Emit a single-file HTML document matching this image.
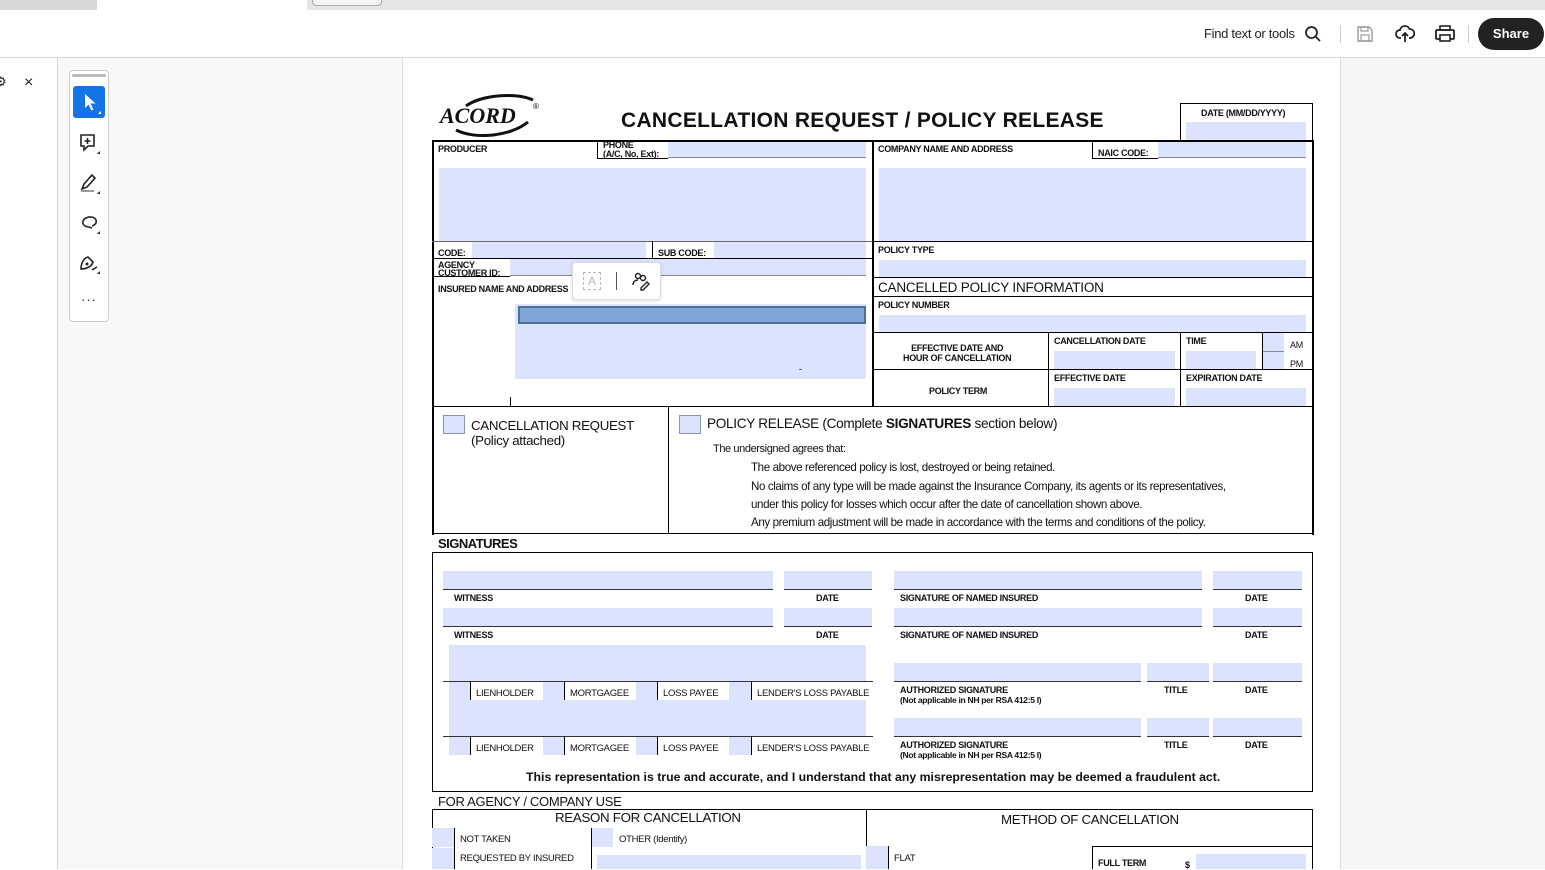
<!DOCTYPE html>
<html><head><meta charset="utf-8"><style>
*{margin:0;padding:0;box-sizing:border-box}
body{width:1545px;height:869px;overflow:hidden;position:relative;background:#fff;font-family:"Liberation Sans",sans-serif}
div,span{position:absolute}
.f{background:#dce3fc}
.h{height:1px;background:#000}
.v{width:1px;background:#000}
.l{font-size:9px;font-weight:bold;letter-spacing:-0.3px;white-space:nowrap;color:#111;line-height:10px}
.n{font-size:9.5px;letter-spacing:-0.3px;white-space:nowrap;color:#111;line-height:11px}
.p{font-size:11.6px;letter-spacing:-0.4px;white-space:nowrap;color:#111;line-height:13px}
.t{font-size:13.3px;letter-spacing:-0.3px;white-space:nowrap;color:#111}
.cb{background:#dce3fc;border:1px solid #8a93b0}
.ul{height:1px;background:#333}
</style></head><body>
<!-- top chrome -->
<div style="left:0;top:0;width:1545px;height:10px;background:#e5e5e5"></div>
<div style="left:0;top:0;width:97px;height:10px;background:#d8d8d8"></div>
<div style="left:97px;top:0;width:210px;height:10px;background:#fff"></div>
<div style="left:312px;top:0;width:70px;height:6px;border:1px solid #aaa;border-top:none;border-radius:0 0 4px 4px;background:#f4f4f4"></div>
<div style="left:0;top:57px;width:1545px;height:1px;background:#d5d5d5"></div>
<span style="left:1204px;top:26px;font-size:13px;color:#222;letter-spacing:-0.3px">Find text or tools</span>
<svg style="position:absolute;left:1304px;top:25px" width="18" height="18" viewBox="0 0 18 18"><circle cx="7.5" cy="7.5" r="5.5" fill="none" stroke="#222" stroke-width="1.8"/><path d="M11.5 11.5L16 16" stroke="#222" stroke-width="1.8"/></svg>
<div style="left:1340px;top:25px;width:1px;height:18px;background:#ccc"></div>
<svg style="position:absolute;left:1356px;top:25px" width="18" height="18" viewBox="0 0 18 18"><path d="M2 2h11l3 3v11H2z" fill="none" stroke="#999" stroke-width="1.4"/><rect x="5" y="2" width="7" height="4" fill="none" stroke="#999" stroke-width="1.2"/><rect x="5" y="10" width="8" height="6" fill="none" stroke="#999" stroke-width="1.2"/></svg>
<svg style="position:absolute;left:1395px;top:24px" width="20" height="20" viewBox="0 0 20 20"><path d="M6 14H5a4 4 0 0 1 0-8 5 5 0 0 1 9.5-1A4 4 0 0 1 15 14h-1" fill="none" stroke="#222" stroke-width="1.8"/><path d="M10 18V9M7 12l3-3 3 3" fill="none" stroke="#222" stroke-width="1.8"/></svg>
<svg style="position:absolute;left:1435px;top:25px" width="20" height="18" viewBox="0 0 20 18"><rect x="5" y="1" width="10" height="4" fill="none" stroke="#222" stroke-width="1.6"/><rect x="1" y="5" width="18" height="9" rx="1" fill="none" stroke="#222" stroke-width="1.8"/><rect x="5" y="10" width="10" height="6" fill="#fff" stroke="#222" stroke-width="1.6"/></svg>
<div style="left:1468px;top:25px;width:1px;height:18px;background:#ccc"></div>
<div style="left:1478px;top:18px;height:32px;background:#222;border-radius:16px;color:#fff;font-weight:bold;font-size:13px;line-height:32px;text-align:center;width:66px">Share</div>
<!-- side panels -->
<div style="left:0;top:58px;width:57px;height:811px;background:#fff"></div>
<div style="left:57px;top:58px;width:1px;height:811px;background:#d5d5d5"></div>
<div style="left:58px;top:58px;width:344px;height:811px;background:#f8f8f8"></div>
<div style="left:402px;top:58px;width:1px;height:811px;background:#ddd"></div>
<div style="left:1340px;top:58px;width:1px;height:811px;background:#ddd"></div>
<div style="left:1341px;top:58px;width:204px;height:811px;background:#f6f6f6"></div>
<span style="left:24px;top:74px;font-size:16px;color:#222">×</span>
<span style="left:-5px;top:74px;font-size:13px;color:#222">⚙</span>
<div style="left:69px;top:70px;width:40px;height:252px;border:1px solid #ccc;border-radius:4px;background:#fff"></div>
<div style="left:72px;top:74px;width:34px;height:3px;background:#bbb;border-radius:2px"></div>
<div style="left:73px;top:86px;width:32px;height:32px;background:#1473e6;border-radius:3px"></div>
<svg style="position:absolute;left:73px;top:86px" width="32" height="32"><path d="M12 8v14l3.5-3.5 3 6 2-1-3-6h5z" fill="#fff"/><path d="M28 25v3h-3z" fill="#fff"/></svg>
<svg style="position:absolute;left:78px;top:132px" width="24" height="24"><path d="M3 3h13v11h-6l-4 4v-4H3z" fill="none" stroke="#222" stroke-width="1.6"/><path d="M9.5 6v6M6.5 9h6" stroke="#222" stroke-width="1.6"/><path d="M22 19v3h-3z" fill="#222"/></svg>
<svg style="position:absolute;left:78px;top:172px" width="24" height="24"><path d="M4 17l2-5 8-9 3 3-8 9z" fill="none" stroke="#222" stroke-width="1.6"/><path d="M3 19h13" stroke="#999" stroke-width="2"/><path d="M22 19v3h-3z" fill="#222"/></svg>
<svg style="position:absolute;left:78px;top:212px" width="24" height="24"><path d="M14 14c3-1 5-3 4-6-1-3-6-4-10-2-4 2-4 6-1 8 2 1 5 1 7 2" fill="none" stroke="#222" stroke-width="1.6"/><path d="M22 19v3h-3z" fill="#222"/></svg>
<svg style="position:absolute;left:78px;top:252px" width="24" height="24"><path d="M3 17c0-6 3-11 7-12l5 5c-1 4-6 7-12 7z" fill="none" stroke="#222" stroke-width="1.6"/><circle cx="9" cy="12" r="1.5" fill="#222"/><path d="M14 18l5-3" stroke="#222" stroke-width="1.6"/><path d="M22 19v3h-3z" fill="#222"/></svg>
<span style="left:81px;top:292px;font-size:13px;color:#222;letter-spacing:1px">···</span>
<!-- page -->
<div style="left:405px;top:58px;width:935px;height:811px;background:#fff"></div>
<!-- logo -->
<svg style="position:absolute;left:436px;top:92px" width="110" height="48"><path d="M30 14C45 3 80 0 97 8" fill="none" stroke="#111" stroke-width="3"/><path d="M20 38C40 48 75 44 92 30" fill="none" stroke="#111" stroke-width="3"/></svg>
<span style="left:440px;top:103px;font-family:'Liberation Serif',serif;font-style:italic;font-weight:bold;font-size:22px;color:#111;letter-spacing:0px">ACORD</span>
<span style="left:533px;top:102px;font-size:8px">®</span>
<span style="left:621px;top:109px;font-size:21px;font-weight:bold;color:#111;letter-spacing:0.3px">CANCELLATION REQUEST / POLICY RELEASE</span>
<!-- date box -->
<div style="left:1180px;top:103px;width:133px;height:38px;border:1px solid #000;border-bottom:none"></div>
<span class="l" style="left:1201px;top:108px">DATE (MM/DD/YYYY)</span>
<div class="f" style="left:1186px;top:122px;width:120px;height:18px"></div>
<!-- main frame -->
<div class="h" style="left:432px;top:140px;width:881px;height:2px"></div>
<div class="v" style="left:432px;top:140px;height:395px;width:2px"></div>
<div class="v" style="left:1312px;top:140px;height:395px;width:2px"></div>
<div class="v" style="left:872px;top:140px;height:267px;width:2px"></div>
<!-- left column -->
<span class="l" style="left:438px;top:144px">PRODUCER</span>
<div class="v" style="left:597px;top:140px;height:19px"></div>
<div class="h" style="left:597px;top:158px;width:71px"></div>
<span class="l" style="left:603px;top:141px;line-height:9px">PHONE<br>(A/C, No, Ext):</span>
<div class="f" style="left:668px;top:142px;width:198px;height:16px;border-bottom:1px solid #889"></div>
<div class="f" style="left:439px;top:168px;width:427px;height:73px"></div>
<div class="h" style="left:432px;top:241px;width:440px;background:#666"></div>
<span class="l" style="left:438px;top:248px">CODE:</span>
<div class="f" style="left:472px;top:242px;width:174px;height:16px"></div>
<div class="v" style="left:652px;top:241px;height:18px"></div>
<span class="l" style="left:658px;top:248px">SUB CODE:</span>
<div class="f" style="left:714px;top:242px;width:152px;height:16px"></div>
<div class="h" style="left:432px;top:258px;width:440px"></div>
<span class="l" style="left:438px;top:261px;line-height:8px">AGENCY<br>CUSTOMER ID:</span>
<div class="h" style="left:432px;top:276px;width:78px"></div>
<div class="f" style="left:510px;top:259px;width:356px;height:17px;border-bottom:1px solid #889"></div>
<span class="l" style="left:438px;top:284px">INSURED NAME AND ADDRESS</span>
<div class="f" style="left:515px;top:304px;width:351px;height:75px"></div>
<div style="left:518px;top:306px;width:348px;height:18px;background:#7ea6d6;border:2px solid #4f6f94"></div>
<span style="left:799px;top:364px;font-size:9px">-</span>
<div class="v" style="left:510px;top:397px;height:9px"></div>
<!-- popup -->
<div style="left:572px;top:262px;width:89px;height:38px;background:#fff;border:1px solid #ddd;border-radius:4px;box-shadow:0 1px 3px rgba(0,0,0,.15)"></div>
<div style="left:583px;top:272px;width:18px;height:18px;border:1px dashed #bbb;color:#bbb;font-size:12px;text-align:center;line-height:16px">A</div>
<div style="left:616px;top:272px;width:1px;height:18px;background:#555"></div>
<svg style="position:absolute;left:631px;top:271px" width="20" height="20"><circle cx="7" cy="5" r="2.5" fill="none" stroke="#222" stroke-width="1.4"/><circle cx="12" cy="7" r="2.5" fill="none" stroke="#222" stroke-width="1.4"/><path d="M2 14c0-3 2-5 5-5M10 17l6-6 2 2-6 6h-2z" fill="none" stroke="#222" stroke-width="1.4"/></svg>
<!-- right column -->
<span class="l" style="left:878px;top:144px">COMPANY NAME AND ADDRESS</span>
<div class="v" style="left:1092px;top:140px;height:19px"></div>
<div class="h" style="left:1092px;top:158px;width:66px"></div>
<span class="l" style="left:1098px;top:148px">NAIC CODE:</span>
<div class="f" style="left:1158px;top:142px;width:148px;height:16px;border-bottom:1px solid #889"></div>
<div class="f" style="left:879px;top:168px;width:427px;height:73px"></div>
<div class="h" style="left:872px;top:241px;width:441px"></div>
<span class="l" style="left:878px;top:245px">POLICY TYPE</span>
<div class="f" style="left:879px;top:260px;width:427px;height:17px"></div>
<div class="h" style="left:872px;top:277px;width:441px"></div>
<span style="left:878px;top:280px;font-size:13.5px;color:#111;letter-spacing:-0.2px">CANCELLED POLICY INFORMATION</span>
<div class="h" style="left:872px;top:296px;width:441px"></div>
<span class="l" style="left:878px;top:300px">POLICY NUMBER</span>
<div class="f" style="left:879px;top:315px;width:427px;height:17px"></div>
<div class="h" style="left:872px;top:332px;width:441px"></div>
<div class="v" style="left:1048px;top:332px;height:75px"></div>
<div class="v" style="left:1180px;top:332px;height:75px"></div>
<div class="v" style="left:1262px;top:332px;height:38px"></div>
<div class="f" style="left:1263px;top:333px;width:21px;height:18px"></div>
<div class="f" style="left:1263px;top:352px;width:21px;height:17px"></div>
<div class="h" style="left:1263px;top:351px;width:21px;background:#889"></div>
<span class="l" style="left:1290px;top:340px;font-weight:normal">AM</span>
<span class="l" style="left:1290px;top:359px;font-weight:normal">PM</span>
<span class="l" style="left:903px;top:343px;text-align:center;line-height:10px">EFFECTIVE DATE AND<br>HOUR OF CANCELLATION</span>
<span class="l" style="left:1054px;top:336px">CANCELLATION DATE</span>
<span class="l" style="left:1186px;top:336px">TIME</span>
<div class="f" style="left:1054px;top:351px;width:121px;height:18px"></div>
<div class="f" style="left:1186px;top:351px;width:70px;height:18px"></div>
<div class="h" style="left:872px;top:369px;width:441px"></div>
<span class="l" style="left:929px;top:386px">POLICY TERM</span>
<span class="l" style="left:1054px;top:373px">EFFECTIVE DATE</span>
<span class="l" style="left:1186px;top:373px">EXPIRATION DATE</span>
<div class="f" style="left:1054px;top:388px;width:121px;height:18px"></div>
<div class="f" style="left:1186px;top:388px;width:120px;height:18px"></div>
<div class="h" style="left:432px;top:406px;width:881px"></div>
<!-- request / release -->
<div class="v" style="left:668px;top:406px;height:128px"></div>
<div class="cb" style="left:443px;top:415px;width:22px;height:19px"></div>
<span class="t" style="left:471px;top:418px">CANCELLATION REQUEST<br>(Policy attached)</span>
<div class="cb" style="left:679px;top:415px;width:22px;height:19px"></div>
<span class="t" style="left:707px;top:416px;font-size:13.6px">POLICY RELEASE (Complete <b>SIGNATURES</b> section below)</span>
<span class="p" style="left:713px;top:443px;font-size:11px">The undersigned agrees that:</span>
<span class="p" style="left:751px;top:461px">The above referenced policy is lost, destroyed or being retained.</span>
<span class="p" style="left:751px;top:480px">No claims of any type will be made against the Insurance Company, its agents or its representatives,</span>
<span class="p" style="left:751px;top:498px">under this policy for losses which occur after the date of cancellation shown above.</span>
<span class="p" style="left:751px;top:516px">Any premium adjustment will be made in accordance with the terms and conditions of the policy.</span>
<div class="h" style="left:432px;top:533px;width:881px"></div>
<!-- signatures -->
<span class="t" style="left:438px;top:536px;font-size:13px;font-weight:bold;letter-spacing:-0.5px">SIGNATURES</span>
<div style="left:432px;top:552px;width:881px;height:240px;border:1px solid #000"></div>
<div class="f" style="left:443px;top:571px;width:330px;height:18px"></div><div class="ul" style="left:443px;top:589px;width:330px"></div>
<div class="f" style="left:784px;top:571px;width:88px;height:18px"></div><div class="ul" style="left:784px;top:589px;width:88px"></div>
<div class="f" style="left:894px;top:571px;width:308px;height:18px"></div><div class="ul" style="left:894px;top:589px;width:308px"></div>
<div class="f" style="left:1213px;top:571px;width:89px;height:18px"></div><div class="ul" style="left:1213px;top:589px;width:89px"></div>
<span class="l" style="left:454px;top:593px">WITNESS</span><span class="l" style="left:816px;top:593px">DATE</span><span class="l" style="left:900px;top:593px">SIGNATURE OF NAMED INSURED</span><span class="l" style="left:1245px;top:593px">DATE</span>
<div class="f" style="left:443px;top:608px;width:330px;height:18px"></div><div class="ul" style="left:443px;top:626px;width:330px"></div>
<div class="f" style="left:784px;top:608px;width:88px;height:18px"></div><div class="ul" style="left:784px;top:626px;width:88px"></div>
<div class="f" style="left:894px;top:608px;width:308px;height:18px"></div><div class="ul" style="left:894px;top:626px;width:308px"></div>
<div class="f" style="left:1213px;top:608px;width:89px;height:18px"></div><div class="ul" style="left:1213px;top:626px;width:89px"></div>
<span class="l" style="left:454px;top:630px">WITNESS</span><span class="l" style="left:816px;top:630px">DATE</span><span class="l" style="left:900px;top:630px">SIGNATURE OF NAMED INSURED</span><span class="l" style="left:1245px;top:630px">DATE</span>
<!-- lienholder blocks -->
<div class="f" style="left:449px;top:645px;width:417px;height:36px"></div>
<div class="ul" style="left:443px;top:681px;width:430px"></div>
<div class="cb" style="left:449px;top:682px;width:21px;height:18px;border:none"></div>
<div class="cb" style="left:543px;top:682px;width:21px;height:18px;border:none"></div>
<div class="cb" style="left:636px;top:682px;width:21px;height:18px;border:none"></div>
<div class="cb" style="left:729px;top:682px;width:22px;height:18px;border:none"></div>
<div class="v" style="left:470px;top:681px;height:19px"></div><div class="v" style="left:564px;top:681px;height:19px"></div><div class="v" style="left:657px;top:681px;height:19px"></div><div class="v" style="left:751px;top:681px;height:19px"></div>
<span class="n" style="left:476px;top:688px">LIENHOLDER</span><span class="n" style="left:570px;top:688px">MORTGAGEE</span><span class="n" style="left:663px;top:688px">LOSS PAYEE</span><span class="n" style="left:757px;top:688px">LENDER'S LOSS PAYABLE</span>
<div class="f" style="left:449px;top:700px;width:417px;height:36px"></div>
<div class="ul" style="left:443px;top:736px;width:430px"></div>
<div class="cb" style="left:449px;top:737px;width:21px;height:18px;border:none"></div>
<div class="cb" style="left:543px;top:737px;width:21px;height:18px;border:none"></div>
<div class="cb" style="left:636px;top:737px;width:21px;height:18px;border:none"></div>
<div class="cb" style="left:729px;top:737px;width:22px;height:18px;border:none"></div>
<div class="v" style="left:470px;top:736px;height:19px"></div><div class="v" style="left:564px;top:736px;height:19px"></div><div class="v" style="left:657px;top:736px;height:19px"></div><div class="v" style="left:751px;top:736px;height:19px"></div>
<span class="n" style="left:476px;top:743px">LIENHOLDER</span><span class="n" style="left:570px;top:743px">MORTGAGEE</span><span class="n" style="left:663px;top:743px">LOSS PAYEE</span><span class="n" style="left:757px;top:743px">LENDER'S LOSS PAYABLE</span>
<!-- authorized -->
<div class="f" style="left:894px;top:663px;width:247px;height:18px"></div><div class="ul" style="left:894px;top:681px;width:247px"></div>
<div class="f" style="left:1147px;top:663px;width:62px;height:18px"></div><div class="ul" style="left:1147px;top:681px;width:62px"></div>
<div class="f" style="left:1213px;top:663px;width:89px;height:18px"></div><div class="ul" style="left:1213px;top:681px;width:89px"></div>
<span class="l" style="left:900px;top:685px">AUTHORIZED SIGNATURE</span><span class="l" style="left:900px;top:695px;font-size:8.5px">(Not applicable in NH per RSA 412:5 I)</span>
<span class="l" style="left:1164px;top:685px">TITLE</span><span class="l" style="left:1245px;top:685px">DATE</span>
<div class="f" style="left:894px;top:718px;width:247px;height:18px"></div><div class="ul" style="left:894px;top:736px;width:247px"></div>
<div class="f" style="left:1147px;top:718px;width:62px;height:18px"></div><div class="ul" style="left:1147px;top:736px;width:62px"></div>
<div class="f" style="left:1213px;top:718px;width:89px;height:18px"></div><div class="ul" style="left:1213px;top:736px;width:89px"></div>
<span class="l" style="left:900px;top:740px">AUTHORIZED SIGNATURE</span><span class="l" style="left:900px;top:750px;font-size:8.5px">(Not applicable in NH per RSA 412:5 I)</span>
<span class="l" style="left:1164px;top:740px">TITLE</span><span class="l" style="left:1245px;top:740px">DATE</span>
<span style="left:526px;top:770px;font-size:12.3px;font-weight:bold;color:#111;letter-spacing:0px">This representation is true and accurate, and I understand that any misrepresentation may be deemed a fraudulent act.</span>
<!-- agency use -->
<span class="t" style="left:438px;top:794px;font-size:13px">FOR AGENCY / COMPANY USE</span>
<div class="h" style="left:432px;top:809px;width:881px"></div>
<div class="v" style="left:432px;top:809px;height:60px"></div>
<div class="v" style="left:1312px;top:809px;height:60px"></div>
<div class="v" style="left:866px;top:809px;height:60px"></div>
<span class="t" style="left:555px;top:810px">REASON FOR CANCELLATION</span>
<span class="t" style="left:1001px;top:812px">METHOD OF CANCELLATION</span>
<div class="cb" style="left:432px;top:828px;width:22px;height:19px;border:none"></div>
<div class="v" style="left:454px;top:828px;height:41px"></div>
<div class="cb" style="left:432px;top:848px;width:22px;height:21px;border:none"></div>
<span class="n" style="left:460px;top:834px">NOT TAKEN</span>
<span class="n" style="left:460px;top:853px">REQUESTED BY INSURED</span>
<div class="cb" style="left:591px;top:828px;width:22px;height:19px;border:none"></div>
<div class="v" style="left:591px;top:828px;height:41px"></div>
<span class="n" style="left:619px;top:834px">OTHER (Identify)</span>
<div class="f" style="left:597px;top:855px;width:264px;height:14px"></div>
<div class="cb" style="left:866px;top:846px;width:22px;height:23px;border:none"></div>
<div class="v" style="left:888px;top:846px;height:23px"></div>
<span class="n" style="left:894px;top:853px">FLAT</span>
<div class="h" style="left:1092px;top:846px;width:221px"></div>
<div class="v" style="left:1092px;top:846px;height:23px"></div>
<span class="l" style="left:1098px;top:858px">FULL TERM</span>
<span class="l" style="left:1185px;top:860px">$</span>
<div class="f" style="left:1196px;top:854px;width:110px;height:15px"></div>
</body></html>
